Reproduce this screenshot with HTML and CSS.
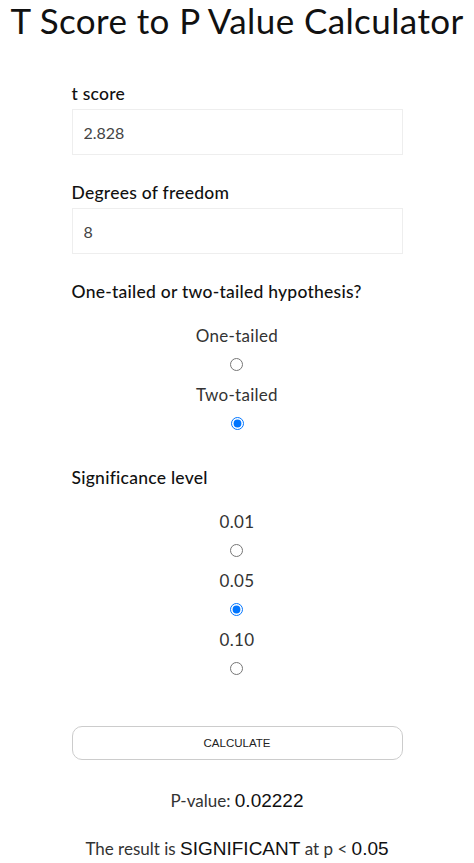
FILE: index.html
```html
<!DOCTYPE html>
<html lang="en">
<head>
    <meta charset="UTF-8">
    <meta name="viewport" content="width=device-width, initial-scale=1.0">
    <title>T Score to P Value Calculator</title>
    <link rel="stylesheet" href="styles.css">
</head>
<body>

    <h1 class="title">T Score to P Value Calculator</h1>

    <div class="calc">
        <!-- t score -->
        <div class="field">
            <label class="field-label" for="tscore">t score</label>
            <input class="field-input" id="tscore" type="text" value="2.828">
        </div>

        <!-- Degrees of freedom -->
        <div class="field">
            <label class="field-label" for="df">Degrees of freedom</label>
            <input class="field-input" id="df" type="text" value="8">
        </div>

        <!-- Tails -->
        <div class="field">
            <div class="field-label">One-tailed or two-tailed hypothesis?</div>
            <div class="options">
                <label class="option">
                    <span class="option-text">One-tailed</span>
                    <input type="radio" name="tails" value="1">
                </label>
                <label class="option">
                    <span class="option-text">Two-tailed</span>
                    <input type="radio" name="tails" value="2" checked>
                </label>
            </div>
        </div>

        <!-- Significance level -->
        <div class="field">
            <div class="field-label">Significance level</div>
            <div class="options">
                <label class="option">
                    <span class="option-text">0.01</span>
                    <input type="radio" name="alpha" value="0.01">
                </label>
                <label class="option">
                    <span class="option-text">0.05</span>
                    <input type="radio" name="alpha" value="0.05" checked>
                </label>
                <label class="option">
                    <span class="option-text">0.10</span>
                    <input type="radio" name="alpha" value="0.10">
                </label>
            </div>
        </div>

        <button class="calc-btn" type="button">CALCULATE</button>

        <p class="result">P-value: <span class="num">0.02222</span></p>
        <p class="result result-text">The result is <span class="num">SIGNIFICANT</span> at p &lt; <span class="num">0.05</span></p>
    </div>

</body>
</html>
```

FILE: styles.css
```css
/* Base */
* {
    margin: 0;
    padding: 0;
    box-sizing: border-box;
}

body {
    font-family: Lato, "Open Sans", sans-serif;
    background-color: #fff;
    color: #222;
}

/* Heading */
.title {
    font-weight: 400;
    font-size: 35px;
    line-height: 40px;
    text-align: center;
    color: #111;
    letter-spacing: 0.4px;
}

/* Calculator */
.calc {
    width: 331px;
    margin: 43px auto 0;
}

.field {
    margin-bottom: 27px;
}

.field-label {
    display: block;
    font-size: 17.5px;
    font-weight: 500;
    color: #111;
    line-height: 22px;
    letter-spacing: 0.25px;
    margin-bottom: 4px;
}

.field-input {
    display: block;
    width: 100%;
    height: 46px;
    border: 1px solid #eee;
    padding: 0 11px;
    font-family: Lato, "Open Sans", sans-serif;
    font-size: 16px;
    color: #444;
    outline: none;
}

/* Radio groups */
.options {
    display: flex;
    flex-direction: column;
    align-items: center;
    padding-top: 19px;
}

.option {
    display: flex;
    flex-direction: column;
    align-items: center;
    height: 59px;
}

.option:last-child {
    height: 55px;
}

.option-text {
    font-size: 17px;
    color: #333;
    line-height: 20px;
    letter-spacing: 0.3px;
}

.option input {
    margin-top: 12px;
    width: 13px;
    height: 13px;
}

/* Button */
.calc-btn {
    display: block;
    width: 100%;
    height: 34px;
    margin-top: 41px;
    border: 1px solid #ccc;
    border-radius: 10px;
    background-color: #fff;
    font-family: "Liberation Sans", Arial, sans-serif;
    font-size: 11.5px;
    color: #222;
    cursor: pointer;
}

/* Results */
.result {
    text-align: center;
    font-size: 17px;
    color: #333;
    margin-top: 30px;
}

.result-text {
    margin-top: 26px;
}

.result .num {
    font-family: "Liberation Sans", Arial, sans-serif;
    font-size: 19px;
    color: #111;
}
```
